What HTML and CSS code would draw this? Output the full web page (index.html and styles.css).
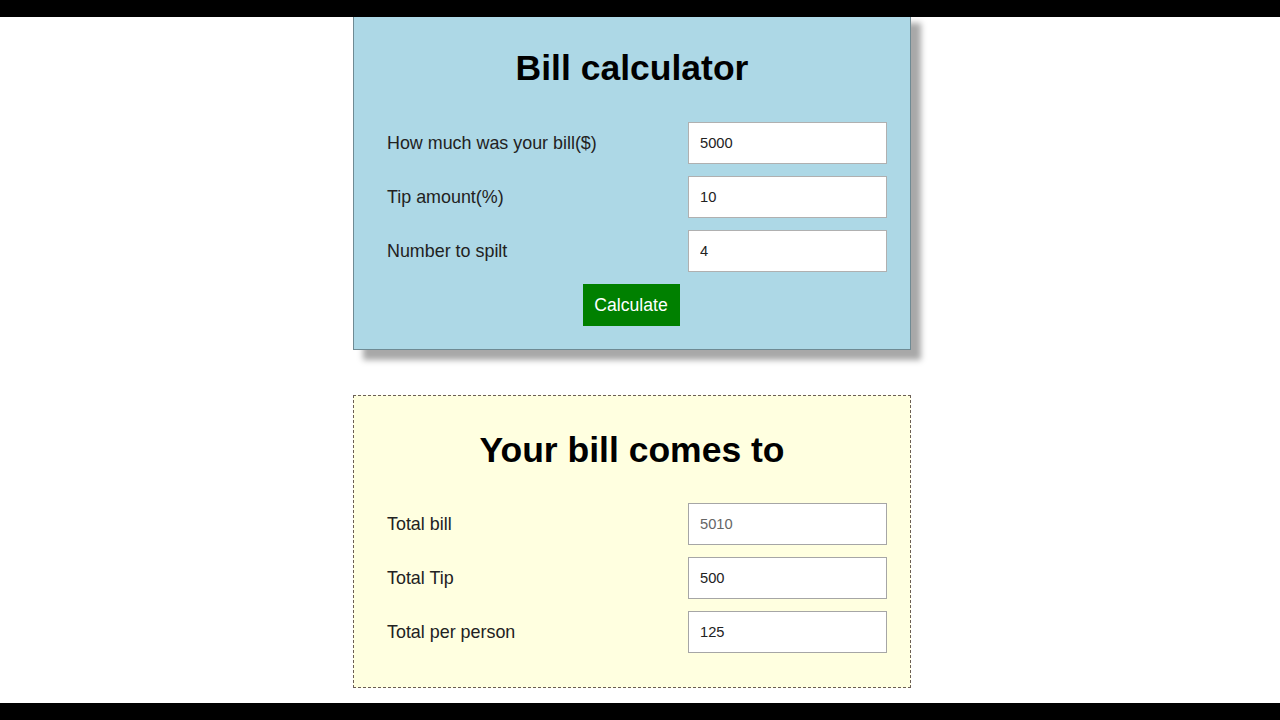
FILE: index.html
```html
<!DOCTYPE html>
<html lang="en">
<head>
<meta charset="utf-8">
<title>Bill calculator</title>
<link rel="stylesheet" href="styles.css">
</head>
<body>
<div class="frame">
  <div class="bar"></div>
  <div class="viewport">
    <div class="page">
      <section class="card card-calc">
        <h1 class="card-title">Bill calculator</h1>
        <div class="rows">
          <div class="row">
            <label class="row-label">How much was your bill($)</label>
            <input class="field" type="text" value="5000">
          </div>
          <div class="row">
            <label class="row-label">Tip amount(%)</label>
            <input class="field" type="text" value="10">
          </div>
          <div class="row">
            <label class="row-label">Number to spilt</label>
            <input class="field" type="text" value="4">
          </div>
          <div class="actions">
            <button class="btn" type="button">Calculate</button>
          </div>
        </div>
      </section>
      <section class="card card-result">
        <h1 class="card-title">Your bill comes to</h1>
        <div class="rows">
          <div class="row">
            <label class="row-label">Total bill</label>
            <input class="field field-muted" type="text" value="5010">
          </div>
          <div class="row">
            <label class="row-label">Total Tip</label>
            <input class="field" type="text" value="500">
          </div>
          <div class="row">
            <label class="row-label">Total per person</label>
            <input class="field" type="text" value="125">
          </div>
        </div>
      </section>
    </div>
  </div>
  <div class="bar"></div>
</div>
</body>
</html>
```
FILE: styles.css
```css
* { box-sizing: border-box; }
html, body { margin: 0; padding: 0; }
body {
  background: #000;
  font-family: "Liberation Sans", Arial, sans-serif;
  color: #222;
}
.frame {
  width: 1280px;
  height: 720px;
  display: flex;
  flex-direction: column;
}
.bar {
  height: 17px;
  background: #000;
  flex: none;
}
.viewport {
  flex: 1;
  background: #fff;
  overflow: hidden;
}
.page {
  width: 1264px;
  display: flex;
  flex-direction: column;
  align-items: center;
  gap: 45px;
}
.card {
  width: 558px;
}
.card-calc {
  margin-top: -4px;
  background: #add8e6;
  border: 1px solid #6f8a93;
  box-shadow: 10px 10px 6px #a8a8a8;
  padding: 0 23px 23px 33px;
}
.card-result {
  background: #ffffe0;
  border: 1px dashed #6b5f55;
  padding: 0 23px 34px 33px;
}
.card-title {
  margin: 34px 0 34px -10px;
  font-size: 35.5px;
  line-height: 40px;
  font-weight: 700;
  color: #000;
  text-align: center;
}
.card-result .card-title { margin-bottom: 33px; }
.rows {
  display: flex;
  flex-direction: column;
  gap: 12px;
}
.row {
  display: flex;
  align-items: center;
  justify-content: space-between;
  height: 42px;
}
.row-label {
  font-size: 17.9px;
  color: #222;
}
.field {
  width: 199px;
  height: 42px;
  border: 1px solid #b0b0b0;
  background: #fff;
  padding: 0 11px;
  font-family: "Liberation Sans", Arial, sans-serif;
  font-size: 14.7px;
  color: #222;
  outline: none;
}
.field-muted { color: #666; }
.card-result .field { border-color: #a6a6a6; }
.actions {
  display: flex;
  justify-content: center;
  margin-left: -12px;
}
.btn {
  width: 97px;
  height: 42px;
  border: none;
  background: #008000;
  color: #fff;
  font-family: "Liberation Sans", Arial, sans-serif;
  font-size: 17.6px;
  padding: 0;
  cursor: pointer;
}
```
